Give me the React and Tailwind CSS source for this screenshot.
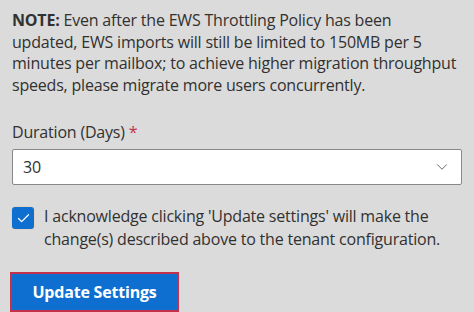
import { ChevronDown, Check } from "lucide-react";

export default function App() {
  return (
    <div
      className="w-[474px] h-[312px] overflow-hidden bg-[#dbdbdb] text-[#323130] pl-3 pr-3"
      style={{ fontFamily: '"Open Sans", "Noto Sans", sans-serif' }}
    >
      <p className="pt-[10px] text-[16px] leading-[21.5px] tracking-[-0.2px]">
        <span className="block">
          <b className="font-bold">NOTE:</b> Even after the EWS Throttling Policy has been
        </span>
        <span className="block">updated, EWS imports will still be limited to 150MB per 5</span>
        <span className="block">minutes per mailbox; to achieve higher migration throughput</span>
        <span className="block">speeds, please migrate more users concurrently.</span>
      </p>

      <label className="block mt-[25px] text-[16px] leading-[22px] tracking-[-0.2px]">
        Duration (Days) <span className="text-[#c4314b]">*</span>
      </label>

      <div className="mt-[6px] w-[450px] h-[36px] bg-white border border-[#8a8886] rounded-[2px] flex items-center justify-between pl-[10px] pr-[10px]">
        <span className="text-[16px] tracking-[-0.2px]">30</span>
        <ChevronDown className="w-[18px] h-[18px] text-[#605e5c]" strokeWidth={1.25} />
      </div>

      <div className="mt-[20px] flex items-start gap-[10px]">
        <div className="mt-[2px] w-[22px] h-[22px] shrink-0 rounded-[3px] bg-[#0f6fd0] flex items-center justify-center ring-1 ring-[#e3d3c3]">
          <Check className="w-[15px] h-[15px] text-white" strokeWidth={2} />
        </div>
        <p className="text-[16px] leading-[23px] tracking-[-0.2px]">
          <span className="block">I acknowledge clicking 'Update settings' will make the</span>
          <span className="block">change(s) described above to the tenant configuration.</span>
        </p>
      </div>

      <button className="-ml-[2px] mt-[21px] w-[169px] h-[40px] bg-[#0f6fd0] border-2 border-[#c4314b] text-white font-bold text-[16px] tracking-[-0.2px] flex items-center justify-center">
        Update Settings
      </button>
    </div>
  );
}
